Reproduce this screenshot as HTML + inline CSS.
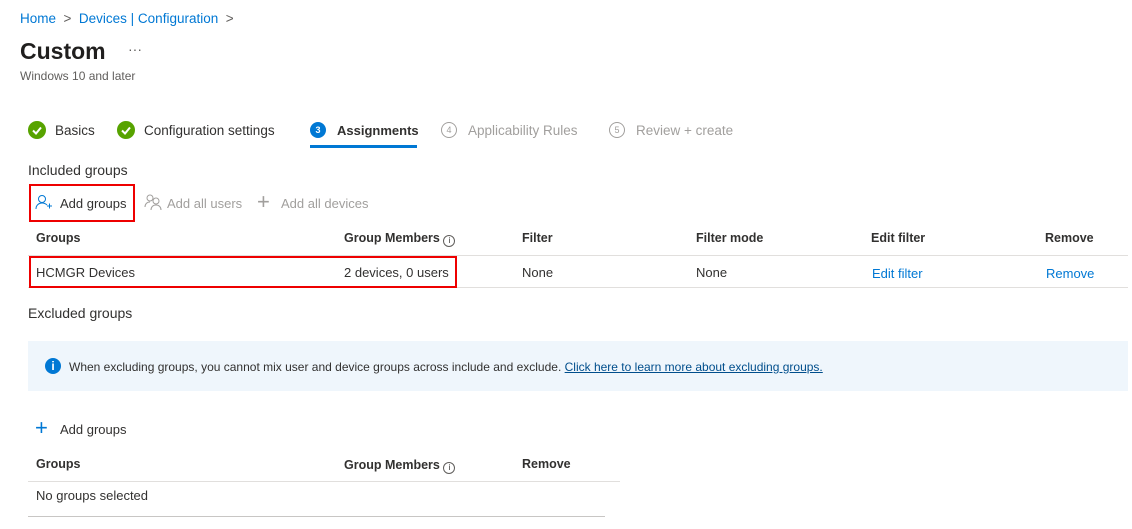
<!DOCTYPE html>
<html><head><meta charset="utf-8"><style>
*{margin:0;padding:0;box-sizing:border-box}
body{width:1132px;height:529px;background:#fff;font-family:"Liberation Sans",sans-serif;color:#323130;position:relative;overflow:hidden;font-size:13px}
.a{position:absolute;white-space:nowrap}
.blue{color:#0078d4}
.gray{color:#a19f9d}
.hd{font-weight:bold;color:#323130;font-size:12.5px}
.line{position:absolute;height:1px;background:#e1dfdd}
.chk{position:absolute;width:18px;height:18px;border-radius:50%;background:#57a300}
.num{position:absolute;width:16px;height:16px;border-radius:50%;font-size:9px;text-align:center;line-height:14px}
.red{position:absolute;border:2px solid #e00}
.ii{display:inline-block;width:12px;height:12px;border:1px solid #605e5c;border-radius:50%;font-size:8px;text-align:center;line-height:10px;font-weight:normal;vertical-align:-1px}
.tab{font-size:13.5px}
</style></head><body>
<div class="a blue" style="left:20px;top:11px;font-size:13.5px">Home <span style="color:#605e5c">&nbsp;&gt;&nbsp;</span> Devices | Configuration <span style="color:#605e5c">&nbsp;&gt;</span></div>
<div class="a" style="left:20px;top:38px;font-size:23px;font-weight:bold;color:#201f1e">Custom</div>
<div class="a" style="left:128px;top:41px;font-size:14px;color:#605e5c">···</div>
<div class="a" style="left:20px;top:69px;font-size:12px;color:#605e5c">Windows 10 and later</div>

<div class="chk" style="left:28px;top:121px"><svg width="18" height="18"><path d="M5 9.5l3 3 5-6" stroke="#fff" stroke-width="2" fill="none"/></svg></div>
<div class="a tab" style="left:55px;top:123px">Basics</div>
<div class="chk" style="left:117px;top:121px"><svg width="18" height="18"><path d="M5 9.5l3 3 5-6" stroke="#fff" stroke-width="2" fill="none"/></svg></div>
<div class="a tab" style="left:144px;top:123px">Configuration settings</div>
<div class="num" style="left:310px;top:122px;background:#0078d4;color:#fff;line-height:16px;font-weight:bold">3</div>
<div class="a tab" style="left:337px;top:123px;font-weight:bold;font-size:13px">Assignments</div>
<div style="position:absolute;left:310px;top:145px;width:107px;height:3px;background:#0078d4"></div>
<div class="num" style="left:441px;top:122px;border:1px solid #a19f9d;color:#a19f9d">4</div>
<div class="a gray tab" style="left:468px;top:123px">Applicability Rules</div>
<div class="num" style="left:609px;top:122px;border:1px solid #a19f9d;color:#a19f9d">5</div>
<div class="a gray tab" style="left:636px;top:123px">Review + create</div>

<div class="a" style="left:28px;top:162px;font-size:14px">Included groups</div>
<svg class="a" style="left:35px;top:193px" width="18" height="18"><circle cx="7" cy="6" r="3.5" stroke="#0078d4" fill="none"/><path d="M1 16c0-4 3-6 6-6s4 1 5 2M12 13h5M14.5 10.5v5" stroke="#0078d4" fill="none"/></svg>
<div class="a" style="left:60px;top:196px">Add groups</div>
<div class="red" style="left:29px;top:184px;width:106px;height:38px"></div>
<svg class="a" style="left:144px;top:193px" width="18" height="18"><circle cx="6" cy="5" r="3" stroke="#a19f9d" fill="none"/><circle cx="12" cy="8" r="3" stroke="#a19f9d" fill="none"/><path d="M1 14c0-3 2-5 5-5M7 17c0-3 2-5 5-5s5 2 5 5" stroke="#a19f9d" fill="none"/></svg>
<div class="a gray" style="left:167px;top:196px">Add all users</div>
<div class="a gray" style="left:257px;top:189px;font-size:22px;font-weight:300">+</div>
<div class="a gray" style="left:281px;top:196px">Add all devices</div>

<div class="a hd" style="left:36px;top:231px">Groups</div>
<div class="a hd" style="left:344px;top:231px">Group Members <span class="ii">i</span></div>
<div class="a hd" style="left:522px;top:231px">Filter</div>
<div class="a hd" style="left:696px;top:231px">Filter mode</div>
<div class="a hd" style="left:871px;top:231px">Edit filter</div>
<div class="a hd" style="left:1045px;top:231px">Remove</div>
<div class="line" style="left:28px;top:255px;width:1100px"></div>
<div class="a" style="left:36px;top:265px">HCMGR Devices</div>
<div class="a" style="left:344px;top:265px">2 devices, 0 users</div>
<div class="a" style="left:522px;top:265px">None</div>
<div class="a" style="left:696px;top:265px">None</div>
<div class="a blue" style="left:872px;top:266px">Edit filter</div>
<div class="a blue" style="left:1046px;top:266px">Remove</div>
<div class="line" style="left:28px;top:287px;width:1100px"></div>
<div class="red" style="left:29px;top:256px;width:428px;height:32px"></div>

<div class="a" style="left:28px;top:305px;font-size:14px">Excluded groups</div>
<div style="position:absolute;left:28px;top:341px;width:1100px;height:50px;background:#eff6fc"></div>
<div class="a" style="left:45px;top:358px;width:16px;height:16px;border-radius:50%;background:#0078d4;color:#fff;font-weight:bold;font-size:12px;text-align:center;line-height:16px">i</div>
<div class="a" style="left:69px;top:360px;font-size:12px">When excluding groups, you cannot mix user and device groups across include and exclude. <span style="color:#004e8c;text-decoration:underline">Click here to learn more about excluding groups.</span></div>

<div class="a blue" style="left:35px;top:415px;font-size:22px;font-weight:300">+</div>
<div class="a" style="left:60px;top:422px">Add groups</div>
<div class="a hd" style="left:36px;top:457px">Groups</div>
<div class="a hd" style="left:344px;top:458px">Group Members <span class="ii">i</span></div>
<div class="a hd" style="left:522px;top:457px">Remove</div>
<div class="line" style="left:28px;top:481px;width:592px"></div>
<div class="a" style="left:36px;top:488px">No groups selected</div>
<div class="line" style="left:28px;top:516px;width:577px;background:#c8c6c4"></div>
</body></html>
